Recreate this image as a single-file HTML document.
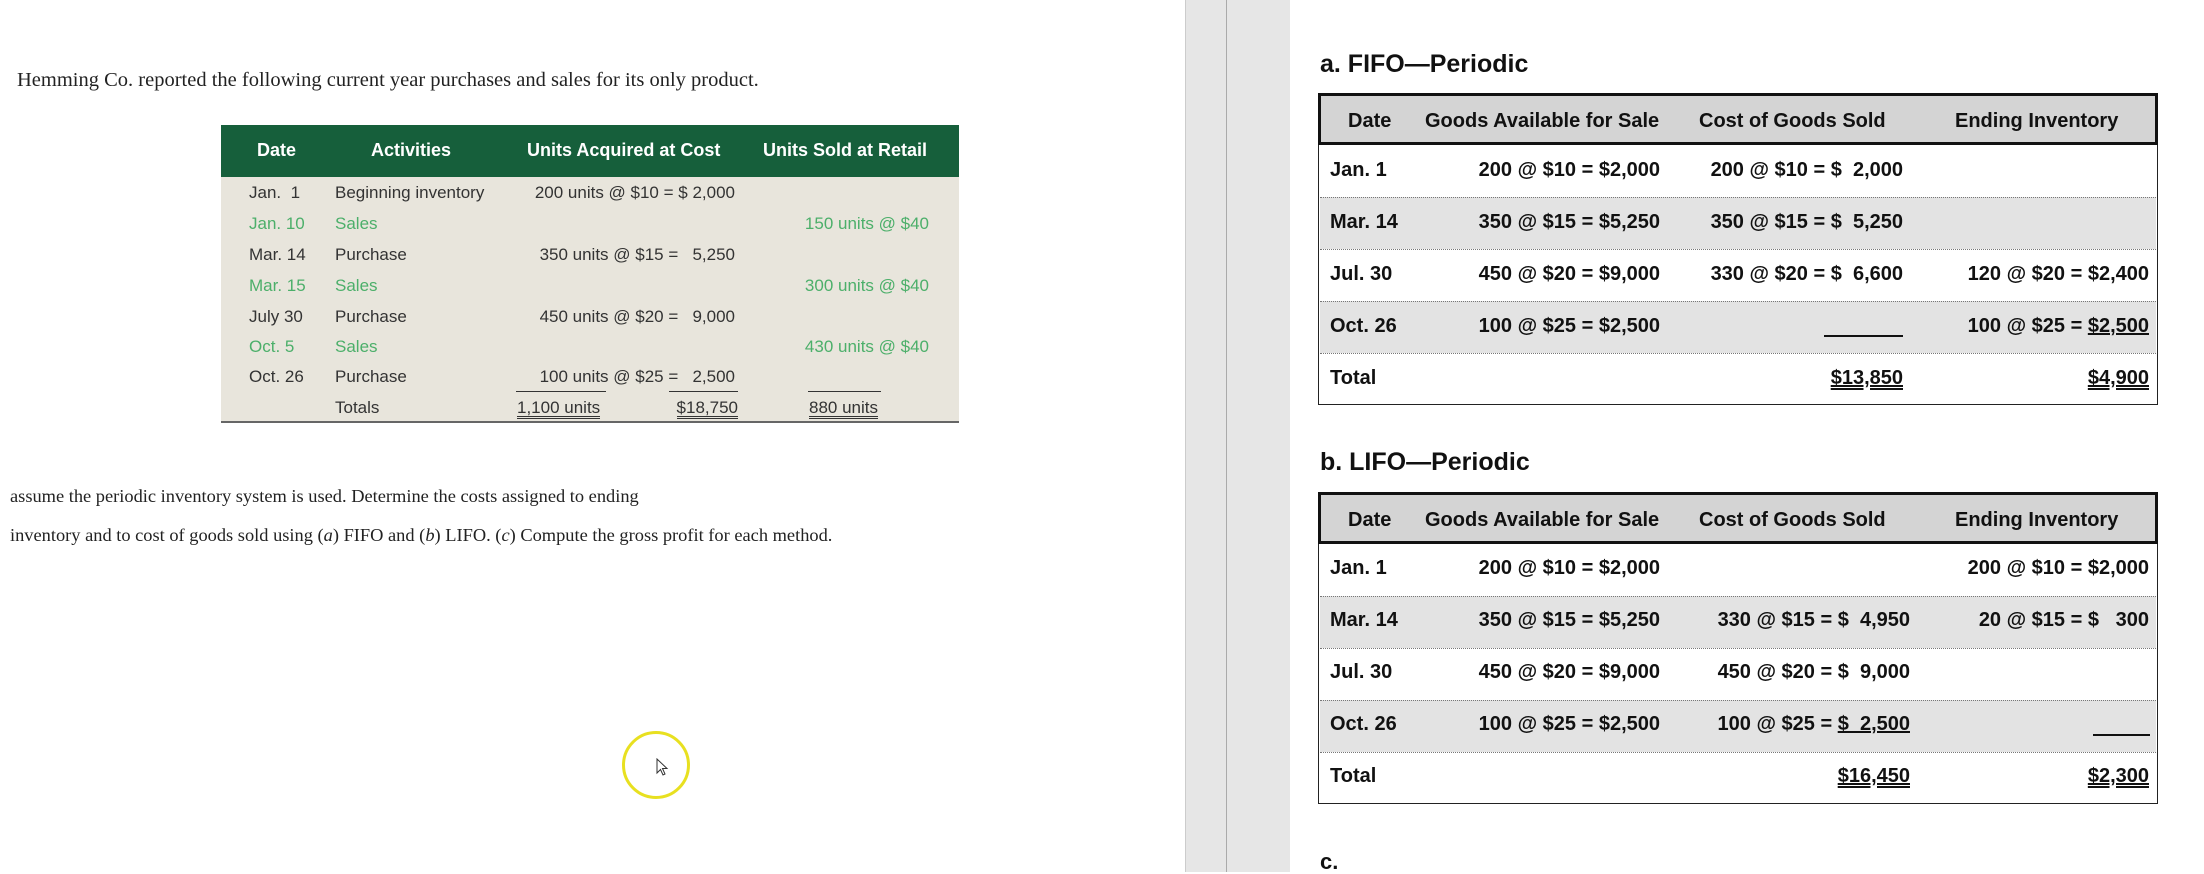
<!DOCTYPE html>
<html><head><meta charset="utf-8"><style>
*{margin:0;padding:0;box-sizing:border-box}
body{width:2204px;height:872px;background:#fff;position:relative;overflow:hidden;font-family:"Liberation Sans",Arial,sans-serif}
.a{position:absolute;white-space:nowrap;line-height:1}
.ser{font-family:"Liberation Serif",serif;font-size:20.5px;color:#222}
.lt{font-size:17px;color:#333}
.g{color:#4caf6a}
.lh{font-size:18px;color:#fff;font-weight:bold}
.r{font-size:20px;font-weight:bold;color:#111}
.h{font-size:20px;font-weight:bold;color:#111}
.t{font-size:25px;font-weight:bold;color:#111}
.u{text-decoration:underline}
.du{text-decoration:underline double}
.row{position:absolute;left:1320px;width:836px;border-top:1px dotted #777}
</style></head><body>
<div class="a ser" style="left:17px;top:70px">Hemming Co. reported the following current year purchases and sales for its only product.</div>
<!-- left table -->
<div class="a" style="left:221px;top:125px;width:738px;height:52px;background:#165f3b"></div>
<div class="a" style="left:221px;top:177px;width:738px;height:246px;background:#e8e5dc;border-bottom:2px solid #666"></div>
<div class="a lh" style="left:257px;top:141px">Date</div>
<div class="a lh" style="left:371px;top:141px">Activities</div>
<div class="a lh" style="left:527px;top:141px">Units Acquired at Cost</div>
<div class="a lh" style="left:763px;top:141px">Units Sold at Retail</div>
<div class="a lt" style="left:249px;top:184px">Jan.&nbsp;&nbsp;1</div><div class="a lt" style="left:335px;top:184px">Beginning inventory</div><div class="a lt" style="right:1469px;top:184px">200 units @ $10 = $ 2,000</div>
<div class="a lt g" style="left:249px;top:215px">Jan. 10</div><div class="a lt g" style="left:335px;top:215px">Sales</div><div class="a lt g" style="right:1275px;top:215px">150 units @ $40</div>
<div class="a lt" style="left:249px;top:246px">Mar. 14</div><div class="a lt" style="left:335px;top:246px">Purchase</div><div class="a lt" style="right:1469px;top:246px">350 units @ $15 =&nbsp;&nbsp;&nbsp;5,250</div>
<div class="a lt g" style="left:249px;top:277px">Mar. 15</div><div class="a lt g" style="left:335px;top:277px">Sales</div><div class="a lt g" style="right:1275px;top:277px">300 units @ $40</div>
<div class="a lt" style="left:249px;top:308px">July 30</div><div class="a lt" style="left:335px;top:308px">Purchase</div><div class="a lt" style="right:1469px;top:308px">450 units @ $20 =&nbsp;&nbsp;&nbsp;9,000</div>
<div class="a lt g" style="left:249px;top:338px">Oct. 5</div><div class="a lt g" style="left:335px;top:338px">Sales</div><div class="a lt g" style="right:1275px;top:338px">430 units @ $40</div>
<div class="a lt" style="left:249px;top:368px">Oct. 26</div><div class="a lt" style="left:335px;top:368px">Purchase</div><div class="a lt" style="right:1469px;top:368px">100 units @ $25 =&nbsp;&nbsp;&nbsp;2,500</div>
<div class="a" style="left:516px;top:391px;width:90px;border-top:1px solid #333"></div>
<div class="a" style="left:669px;top:391px;width:69px;border-top:1px solid #333"></div>
<div class="a" style="left:808px;top:391px;width:73px;border-top:1px solid #333"></div>
<div class="a lt" style="left:335px;top:399px">Totals</div>
<div class="a lt" style="left:517px;top:399px;border-bottom:3px double #333">1,100 units</div>
<div class="a lt" style="right:1466px;top:399px;border-bottom:3px double #333">$18,750</div>
<div class="a lt" style="left:809px;top:399px;border-bottom:3px double #333">880 units</div>
<div class="a ser" style="left:10px;top:487px;font-size:18.4px">assume the periodic inventory system is used. Determine the costs assigned to ending</div>
<div class="a ser" style="left:10px;top:526px;font-size:18.4px">inventory and to cost of goods sold using (<i>a</i>) FIFO and (<i>b</i>) LIFO. (<i>c</i>) Compute the gross profit for each method.</div>
<div class="a" style="left:622px;top:731px;width:68px;height:68px;border:3px solid #e8e020;border-radius:50%"></div>
<svg class="a" style="left:656px;top:758px" width="14" height="20" viewBox="0 0 14 20"><path d="M1 1 L1 15 L4.5 11.5 L7 17 L9 16 L6.5 10.5 L11 10.5 Z" fill="#fff" stroke="#333" stroke-width="1"/></svg>
<!-- gray strip -->
<div class="a" style="left:1185px;top:0;width:105px;height:872px;background:#e6e6e6;border-left:1px solid #ccc"></div>
<div class="a" style="left:1226px;top:0;width:1px;height:872px;background:#aaa"></div>

<div class="a t" style="left:1320px;top:52px">a. FIFO—Periodic</div>
<div class="a" style="left:1318px;top:94px;width:840px;height:311px;border:1px solid #222;border-top:none;background:#fff"></div>
<div class="a" style="left:1318px;top:93px;width:840px;height:52px;background:#d4d4d4;border:3px solid #111"></div>
<div class="row" style="top:197px;height:52px;background:#e3e3e3"></div>
<div class="row" style="top:249px;height:1px"></div>
<div class="row" style="top:301px;height:52px;background:#e3e3e3"></div>
<div class="row" style="top:353px;height:1px"></div>
<div class="a h" style="left:1348px;top:111px">Date</div>
<div class="a h" style="left:1425px;top:111px">Goods Available for Sale</div>
<div class="a h" style="left:1699px;top:111px">Cost of Goods Sold</div>
<div class="a h" style="left:1955px;top:111px">Ending Inventory</div>
<div class="a r" style="left:1330px;top:160px">Jan. 1</div><div class="a r" style="right:544px;top:160px">200 @ $10 = $2,000</div><div class="a r" style="right:301px;top:160px">200 @ $10 = $&nbsp;&nbsp;2,000</div>
<div class="a r" style="left:1330px;top:212px">Mar. 14</div><div class="a r" style="right:544px;top:212px">350 @ $15 = $5,250</div><div class="a r" style="right:301px;top:212px">350 @ $15 = $&nbsp;&nbsp;5,250</div>
<div class="a r" style="left:1330px;top:264px">Jul. 30</div><div class="a r" style="right:544px;top:264px">450 @ $20 = $9,000</div><div class="a r" style="right:301px;top:264px">330 @ $20 = $&nbsp;&nbsp;6,600</div><div class="a r" style="right:55px;top:264px">120 @ $20 = $2,400</div>
<div class="a r" style="left:1330px;top:316px">Oct. 26</div><div class="a r" style="right:544px;top:316px">100 @ $25 = $2,500</div><div class="a" style="left:1824px;top:335px;width:79px;border-top:2px solid #111"></div><div class="a r" style="right:55px;top:316px">100 @ $25 = <span class="u">$2,500</span></div>
<div class="a r" style="left:1330px;top:368px">Total</div><div class="a r du" style="right:301px;top:368px">$13,850</div><div class="a r du" style="right:55px;top:368px">$4,900</div>

<div class="a t" style="left:1320px;top:450px">b. LIFO—Periodic</div>
<div class="a" style="left:1318px;top:493px;width:840px;height:311px;border:1px solid #222;border-top:none;background:#fff"></div>
<div class="a" style="left:1318px;top:492px;width:840px;height:52px;background:#d4d4d4;border:3px solid #111"></div>
<div class="row" style="top:596px;height:52px;background:#e3e3e3"></div>
<div class="row" style="top:648px;height:1px"></div>
<div class="row" style="top:700px;height:52px;background:#e3e3e3"></div>
<div class="row" style="top:752px;height:1px"></div>
<div class="a h" style="left:1348px;top:510px">Date</div>
<div class="a h" style="left:1425px;top:510px">Goods Available for Sale</div>
<div class="a h" style="left:1699px;top:510px">Cost of Goods Sold</div>
<div class="a h" style="left:1955px;top:510px">Ending Inventory</div>
<div class="a r" style="left:1330px;top:558px">Jan. 1</div><div class="a r" style="right:544px;top:558px">200 @ $10 = $2,000</div><div class="a r" style="right:55px;top:558px">200 @ $10 = $2,000</div>
<div class="a r" style="left:1330px;top:610px">Mar. 14</div><div class="a r" style="right:544px;top:610px">350 @ $15 = $5,250</div><div class="a r" style="right:294px;top:610px">330 @ $15 = $&nbsp;&nbsp;4,950</div><div class="a r" style="right:55px;top:610px">20 @ $15 = $&nbsp;&nbsp;&nbsp;300</div>
<div class="a r" style="left:1330px;top:662px">Jul. 30</div><div class="a r" style="right:544px;top:662px">450 @ $20 = $9,000</div><div class="a r" style="right:294px;top:662px">450 @ $20 = $&nbsp;&nbsp;9,000</div>
<div class="a r" style="left:1330px;top:714px">Oct. 26</div><div class="a r" style="right:544px;top:714px">100 @ $25 = $2,500</div><div class="a r" style="right:294px;top:714px">100 @ $25 = <span class="u">$&nbsp;&nbsp;2,500</span></div><div class="a" style="left:2093px;top:734px;width:57px;border-top:2px solid #111"></div>
<div class="a r" style="left:1330px;top:766px">Total</div><div class="a r du" style="right:294px;top:766px">$16,450</div><div class="a r du" style="right:55px;top:766px">$2,300</div>

<div class="a t" style="left:1320px;top:851px;font-size:22px">c.</div>
</body></html>
